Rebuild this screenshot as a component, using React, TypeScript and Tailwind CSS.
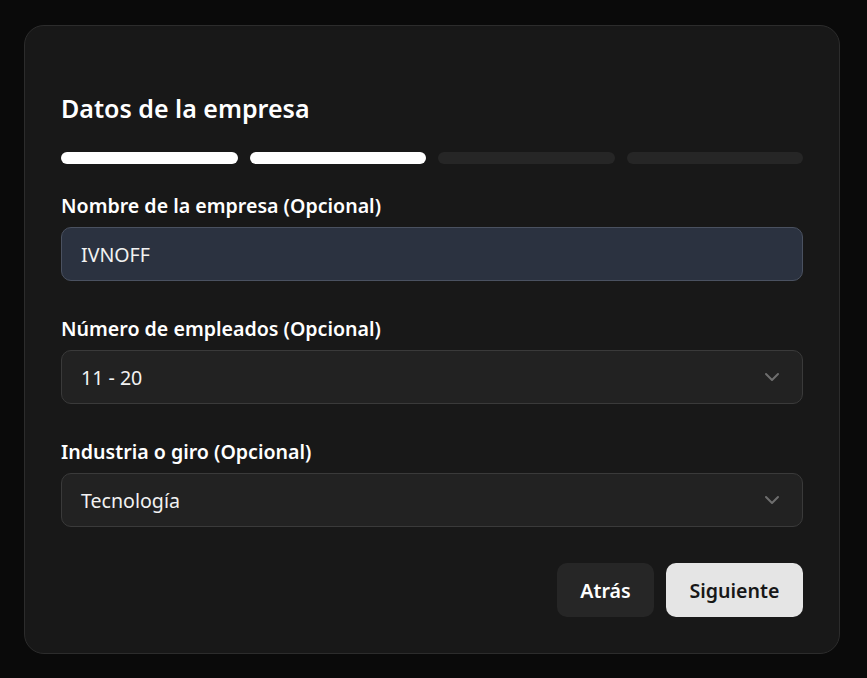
import { ChevronDown } from "lucide-react";

function Field({ label, value, select }: { label: string; value: string; select?: boolean }) {
  return (
    <div className="flex flex-col">
      <label className="text-[19.6px] leading-7 font-semibold text-white mb-[7px]">{label}</label>
      {select ? (
        <div className="h-[54px] rounded-[10px] border border-[#3a3a3a] bg-[#222222] flex items-center justify-between pl-[19px] pr-[18px]">
          <span className="pt-[3px] text-[19.6px] text-[#f2f2f2]">{value}</span>
          <ChevronDown className="h-6 w-6 text-[#6e6e6e]" strokeWidth={2} />
        </div>
      ) : (
        <div className="h-[54px] rounded-[10px] border border-[#4a5160] bg-[#2b3240] flex items-center pl-[19px]">
          <span className="pt-[3px] text-[19.6px] text-[#f2f2f2]">{value}</span>
        </div>
      )}
    </div>
  );
}

export default function App() {
  const steps = [true, true, false, false];
  return (
    <div
      className="min-h-screen bg-[#0a0a0a] flex items-center pl-6"
      style={{ fontFamily: '"Noto Sans", "Open Sans", sans-serif' }}
    >
      <div className="w-[816px] rounded-[20px] border border-[#2c2c2c] bg-[#181818] pl-9 pr-9 pt-[66px] pb-9">
        <h1 className="text-[25px] leading-8 font-semibold text-white">Datos de la empresa</h1>
        <div className="mt-7 grid grid-cols-4 gap-3">
          {steps.map((on, i) => (
            <div key={i} className={on ? "h-3 rounded-full bg-white" : "h-3 rounded-full bg-[#262626]"} />
          ))}
        </div>
        <div className="mt-7 flex flex-col gap-[34px]">
          <Field label="Nombre de la empresa (Opcional)" value="IVNOFF" />
          <Field label="Número de empleados (Opcional)" value="11 - 20" select />
          <Field label="Industria o giro (Opcional)" value="Tecnología" select />
        </div>
        <div className="mt-9 flex justify-end gap-3">
          <button className="h-[54px] w-[97px] rounded-[10px] bg-[#262626] pt-[3px] text-[19.6px] font-semibold text-white">
            Atrás
          </button>
          <button className="h-[54px] w-[137px] rounded-[10px] bg-[#e5e5e5] pt-[3px] text-[19.6px] font-semibold text-[#171717]">
            Siguiente
          </button>
        </div>
      </div>
    </div>
  );
}
